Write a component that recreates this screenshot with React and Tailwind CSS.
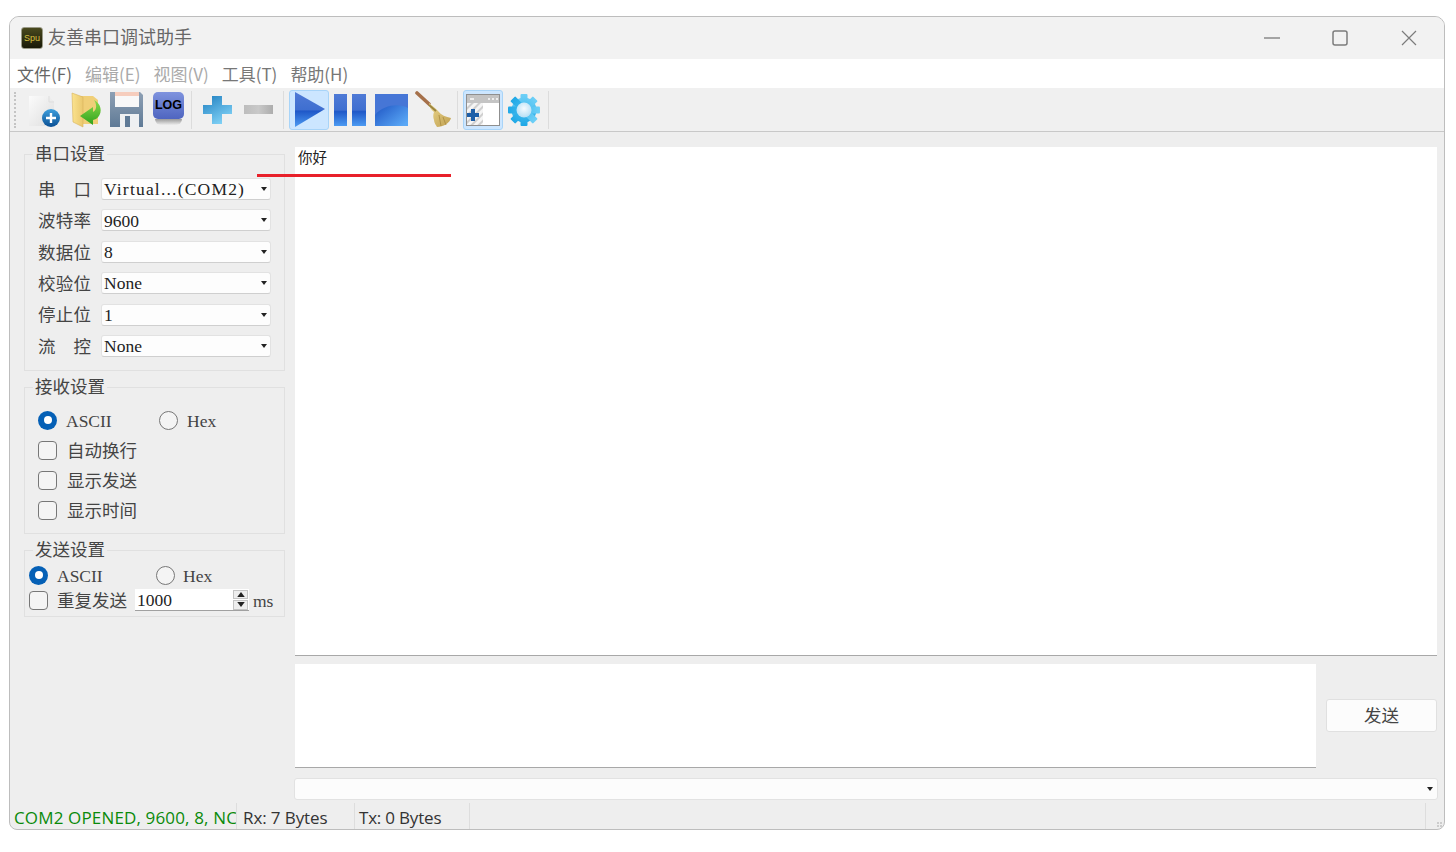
import React from 'react';

const cjk = "font-['Noto_Sans_CJK_SC','Noto_Sans',sans-serif]";
const latin = "font-['Liberation_Serif','Noto_Sans_CJK_SC',serif]";

const Separator = ({ className }) => <div className={`w-px h-[38px] bg-[#dcdcdc] shrink-0 ${className}`}></div>;

const DropArrow = () => (
  <svg width="6" height="4" viewBox="0 0 6 4" className="shrink-0">
    <path d="M0 0h6L3 4z" fill="#222" />
  </svg>
);

const Combo = ({ value, wide }) => (
  <div className={`w-[170px] h-[22px] flex items-center justify-between pl-[2px] pr-[3px] bg-[#fdfdfd] border border-[#e2e2e2] border-b-[#cfcfcf] rounded-[3px] ${latin} text-[17.5px] text-[#222]`}>
    <span className={wide ? 'leading-none whitespace-pre pt-[2px] tracking-[1.2px]' : 'leading-none whitespace-pre pt-[2px]'}>{value}</span>
    <DropArrow />
  </div>
);

const Radio = ({ checked }) =>
  checked ? (
    <div className="w-[19px] h-[19px] rounded-full bg-[#0560b6] flex items-center justify-center shrink-0">
      <div className="w-2 h-2 rounded-full bg-white"></div>
    </div>
  ) : (
    <div className="w-[19px] h-[19px] rounded-full border-[1.5px] border-[#777] bg-[#f4f4f4] shrink-0"></div>
  );

const Check = () => <div className="w-[19px] h-[19px] rounded-[4px] border-[1.5px] border-[#777] bg-[#f4f4f4] shrink-0"></div>;

const Group = ({ title, className, children }) => (
  <fieldset className={`border border-[#e0e0e0] w-[261px] ${className}`}>
    <legend className={`ml-2 px-[2px] h-5 leading-[18px] text-[17.5px] text-[#444] ${cjk}`}>{title}</legend>
    {children}
  </fieldset>
);

const PortRow = ({ label, value, wide }) => (
  <div className="flex items-center h-[22px]">
    <div className={`w-[53px] ml-[13px] mr-[10px] flex justify-between text-[17.5px] text-[#444] ${cjk}`}>
      {label.map((c, i) => <span key={i}>{c}</span>)}
    </div>
    <Combo value={value} wide={wide} />
  </div>
);

const CheckRow = ({ label }) => (
  <div className="flex items-center h-5 pl-[13px] gap-[10px]">
    <Check />
    <span className={`text-[17.5px] text-[#444] ${cjk}`}>{label}</span>
  </div>
);

const NewFileIcon = () => (
  <svg width="32" height="36" viewBox="0 0 32 36" className="shrink-0">
    <defs>
      <linearGradient id="doc" x1="0" y1="0" x2="1" y2="1"><stop offset="0" stopColor="#fbfbfb" /><stop offset="1" stopColor="#dedede" /></linearGradient>
      <linearGradient id="docb" x1="0" y1="0" x2="0" y2="1"><stop offset="0" stopColor="#3fa0de" /><stop offset="1" stopColor="#0a4f94" /></linearGradient>
    </defs>
    <path d="M0 4h20l5 6v24H0z" fill="url(#doc)" />
    <path d="M20 4v6h5" fill="none" stroke="#ddd" />
    <circle cx="22" cy="26" r="9" fill="url(#docb)" />
    <path d="M22 21v10M17 26h10" stroke="#fff" strokeWidth="2.4" />
  </svg>
);

const FolderIcon = () => (
  <svg width="31" height="36" viewBox="0 0 31 36" className="shrink-0">
    <defs>
      <linearGradient id="fold" x1="0" y1="0" x2="1" y2="0"><stop offset="0" stopColor="#fbe38f" /><stop offset="1" stopColor="#eac86e" /></linearGradient>
      <linearGradient id="arrowg" x1="0" y1="0" x2="0" y2="1"><stop offset="0" stopColor="#8ddb4a" /><stop offset="1" stopColor="#2ea21d" /></linearGradient>
    </defs>
    <path d="M9 4h13l5 4v24H9z" fill="#f0cf78" />
    <path d="M1 1l11 4v30L2 30z" fill="url(#fold)" stroke="#d9b45a" strokeWidth="0.6" />
    <path d="M23 8c8 4 9 14 2 19l-3 1v5L9 24l13-9v5c4-2 4-8 1-12z" fill="url(#arrowg)" />
  </svg>
);

const SaveIcon = () => (
  <svg width="35" height="36" viewBox="0 0 35 36" className="shrink-0">
    <defs>
      <linearGradient id="disk" x1="0" y1="0" x2="0" y2="1"><stop offset="0" stopColor="#8ea0b4" /><stop offset="1" stopColor="#5f7a96" /></linearGradient>
    </defs>
    <path d="M1 0h30l3 3v32H1z" fill="url(#disk)" />
    <rect x="6" y="0" width="24" height="4" fill="#f6cdbd" />
    <rect x="6" y="4" width="24" height="11" fill="#f8f8f8" />
    <rect x="11" y="22" width="19" height="13" fill="#eef0f2" />
    <rect x="16" y="24" width="5" height="11" fill="#5f7a96" />
  </svg>
);

const LogIcon = () => (
  <div className="w-[31px] h-[35px] shrink-0 flex flex-col">
    <div className="h-[27px] rounded-[5px] bg-gradient-to-b from-[#7f93de] to-[#4f65c0] flex items-center justify-center font-['Liberation_Sans',sans-serif] font-bold text-[12.5px] leading-none text-black">LOG</div>
    <div className="h-[6px] mx-[2px] rounded-b-full bg-gradient-to-b from-[#9a9a9a] to-[#eeeeee]"></div>
  </div>
);

const PlusIcon = () => (
  <svg width="30" height="30" viewBox="0 0 30 30" className="shrink-0">
    <defs>
      <linearGradient id="plus" x1="0" y1="0" x2="0.6" y2="1"><stop offset="0" stopColor="#1f7fc0" /><stop offset="1" stopColor="#7fd0f5" /></linearGradient>
    </defs>
    <path d="M10 1h10v9h10v9H20v10H10V19H1v-9h9z" fill="url(#plus)" />
  </svg>
);

const MinusIcon = () => (
  <div className="w-[29px] h-[9px] shrink-0 bg-gradient-to-r from-[#bdbdbd] via-[#c9c9c9] to-[#adadad]"></div>
);

const BlueFill = ({ id }) => (
  <linearGradient id={id} x1="0" y1="0" x2="0" y2="1">
    <stop offset="0" stopColor="#4f7ad6" />
    <stop offset="0.5" stopColor="#3f6fd0" />
    <stop offset="0.55" stopColor="#1f58c8" />
    <stop offset="1" stopColor="#4d9bf2" />
  </linearGradient>
);

const PlayIcon = () => (
  <div className="w-10 h-10 shrink-0 rounded-[3px] bg-[#cce6ff] border border-[#a8d4f8] flex items-center justify-center">
    <svg width="31" height="35" viewBox="0 0 31 35">
      <defs><BlueFill id="play" /></defs>
      <path d="M1 0l30 17L1 35z" fill="url(#play)" />
    </svg>
  </div>
);

const PauseIcon = () => (
  <svg width="32" height="32" viewBox="0 0 32 32" className="shrink-0">
    <defs><BlueFill id="pause" /></defs>
    <rect x="0" y="0" width="13" height="32" fill="url(#pause)" />
    <rect x="18" y="0" width="14" height="32" fill="url(#pause)" />
  </svg>
);

const StopIcon = () => (
  <svg width="33" height="32" viewBox="0 0 33 32" className="shrink-0">
    <defs>
      <linearGradient id="stop" x1="0" y1="0" x2="1" y2="0.8"><stop offset="0" stopColor="#1f55c4" /><stop offset="1" stopColor="#5aa8f6" /></linearGradient>
    </defs>
    <rect width="33" height="32" fill="#4676d6" />
    <path d="M0 32V21C8 11 24 9 33 14v18z" fill="url(#stop)" />
  </svg>
);

const BroomIcon = () => (
  <svg width="37" height="37" viewBox="0 0 37 37" className="shrink-0">
    <defs>
      <linearGradient id="straw" x1="0" y1="0" x2="1" y2="1"><stop offset="0" stopColor="#ecd88f" /><stop offset="1" stopColor="#c0a050" /></linearGradient>
    </defs>
    <path d="M2 2l12 11" stroke="#a5704a" strokeWidth="3.6" strokeLinecap="round" />
    <path d="M14 12l6 5c1 1 2 2 3 3 3 4 8 6 13 7-1 5-8 9-14 9-1-2-3-4-3-7-1-3-1-5 0-8-3-2-5-5-5-9z" fill="url(#straw)" />
    <path d="M14 14l7 6" stroke="#9a8440" strokeWidth="2" />
    <path d="M24 24l2 11M28 26l3 8" stroke="#a88a40" strokeWidth="0.8" />
  </svg>
);

const PanelIcon = () => (
  <div className="w-[40px] h-10 shrink-0 rounded-[3px] bg-[#cce6ff] border border-[#a8d4f8] flex items-center justify-center">
    <svg width="34" height="32" viewBox="0 0 34 32">
      <defs>
        <pattern id="hatch" width="5" height="5" patternUnits="userSpaceOnUse" patternTransform="rotate(45)">
          <rect width="5" height="5" fill="#f5f5f5" />
          <rect width="2" height="5" fill="#cfcfcf" />
        </pattern>
      </defs>
      <rect x="0.5" y="0.5" width="33" height="31" fill="#fff" stroke="#8f8f8f" />
      <rect x="1" y="1" width="32" height="8" fill="#c4c4c4" />
      <path d="M4 5h4M22 5h2M26 5h2M30 5h2" stroke="#eeeeee" strokeWidth="2" />
      <rect x="1" y="9" width="16" height="22" fill="url(#hatch)" />
      <path d="M7 15v12M1 21h12" stroke="#1d5fa8" strokeWidth="4" />
    </svg>
  </div>
);

const GearIcon = () => (
  <svg width="32" height="32" viewBox="0 0 32 32" className="shrink-0">
    <defs>
      <radialGradient id="hub" cx="0.5" cy="0.4" r="0.6"><stop offset="0" stopColor="#f5fbff" /><stop offset="1" stopColor="#b5dff5" /></radialGradient>
      <linearGradient id="gear" x1="0" y1="0" x2="0" y2="1"><stop offset="0" stopColor="#6fd0f7" /><stop offset="1" stopColor="#1fa8e6" /></linearGradient>
    </defs>
    <g fill="url(#gear)">
      <circle cx="16" cy="16" r="12.5" />
      <rect x="12.5" y="0" width="7" height="32" rx="1" />
      <rect x="12.5" y="0" width="7" height="32" rx="1" transform="rotate(45 16 16)" />
      <rect x="12.5" y="0" width="7" height="32" rx="1" transform="rotate(90 16 16)" />
      <rect x="12.5" y="0" width="7" height="32" rx="1" transform="rotate(135 16 16)" />
    </g>
    <circle cx="16" cy="16" r="7.5" fill="url(#hub)" />
  </svg>
);

const App = () => {
  return (
    <div className="relative w-[1456px] h-[852px] bg-white pt-4 pl-[9px] overflow-hidden">
      <div className="w-[1436px] h-[814px] flex flex-col border border-[#bdbdbd] rounded-t-[10px] rounded-b-[8px] overflow-hidden bg-[#eeeeee]">
        {/* Title bar */}
        <div className="h-[42px] shrink-0 bg-[#f2f2f2] flex items-center pl-[11px]">
          <div className="w-[22px] h-[22px] rounded-[3px] bg-gradient-to-b from-[#4a4a1e] to-[#1a1a08] border border-[#9a9a88] flex items-center justify-center text-[9px] leading-none text-[#d8c040] font-['Liberation_Sans',sans-serif]">Spu</div>
          <span className={`ml-[5px] text-[18px] leading-[20px] pb-1 text-[#666] ${cjk}`}>友善串口调试助手</span>
          <div className="ml-auto flex items-center">
            <svg width="16" height="16" viewBox="0 0 16 16"><path d="M0 8h16" stroke="#8a8a8a" strokeWidth="1.3" /></svg>
            <svg width="16" height="16" viewBox="0 0 16 16" className="ml-[52px]"><rect x="1" y="1" width="14" height="14" rx="2" fill="none" stroke="#7c7c7c" strokeWidth="1.5" /></svg>
            <svg width="16" height="16" viewBox="0 0 16 16" className="ml-[53px] mr-[27px]"><path d="M1 1l14 14M15 1L1 15" stroke="#7c7c7c" strokeWidth="1.2" /></svg>
          </div>
        </div>

        {/* Menu */}
        <div className={`h-[29px] shrink-0 bg-white flex items-center pl-[7px] gap-[13px] text-[17px] ${cjk}`}>
          <span className="text-[#666]">文件(F)</span>
          <span className="text-[#aaa]">编辑(E)</span>
          <span className="text-[#aaa]">视图(V)</span>
          <span className="text-[#777]">工具(T)</span>
          <span className="text-[#777]">帮助(H)</span>
        </div>

        {/* Toolbar */}
        <div className="h-11 shrink-0 bg-[#f0f0f0] border-b border-[#c8c8c8] flex items-center pl-1">
          <div className="w-[2px] h-[36px] border-l-2 border-dotted border-[#c4c4c4] shrink-0"></div>
          <div className="ml-[13px]"><NewFileIcon /></div>
          <div className="ml-[10px]"><FolderIcon /></div>
          <div className="ml-[7px]"><SaveIcon /></div>
          <div className="ml-[9px]"><LogIcon /></div>
          <Separator className="ml-[7px]" />
          <div className="ml-[10px]"><PlusIcon /></div>
          <div className="ml-3"><MinusIcon /></div>
          <Separator className="ml-[10px]" />
          <div className="ml-[5px]"><PlayIcon /></div>
          <div className="ml-[5px]"><PauseIcon /></div>
          <div className="ml-[9px]"><StopIcon /></div>
          <div className="ml-[7px]"><BroomIcon /></div>
          <Separator className="ml-[5px]" />
          <div className="ml-[5px]"><PanelIcon /></div>
          <div className="ml-[5px]"><GearIcon /></div>
          <Separator className="ml-2" />
        </div>

        {/* Body */}
        <div className="flex-1 flex min-h-0">
          {/* Left settings column */}
          <div className="w-[285px] shrink-0 pl-[14px] pt-3 flex flex-col gap-[6px]">
            <Group title="串口设置" className="h-[227px]">
              <div className="flex flex-col gap-[9.4px] pt-[14px]">
                <PortRow label={['串', '口']} value="Virtual...(COM2)" wide />
                <PortRow label={['波', '特', '率']} value="9600" />
                <PortRow label={['数', '据', '位']} value="8" />
                <PortRow label={['校', '验', '位']} value="None" />
                <PortRow label={['停', '止', '位']} value="1" />
                <PortRow label={['流', '控']} value="None" />
              </div>
            </Group>

            <Group title="接收设置" className="h-[157px]">
              <div className="flex flex-col gap-[10px] pt-[13px]">
                <div className={`flex items-center h-5 pl-[13px] ${latin} text-[17.5px] text-[#444]`}>
                  <Radio checked />
                  <span className="ml-[9px] w-[93px] pt-[2px]">ASCII</span>
                  <Radio />
                  <span className="ml-[9px] pt-[2px]">Hex</span>
                </div>
                <CheckRow label="自动换行" />
                <CheckRow label="显示发送" />
                <CheckRow label="显示时间" />
              </div>
            </Group>

            <Group title="发送设置" className="h-[77px]">
              <div className="flex flex-col gap-[5px] pt-[5px] pl-[4px]">
                <div className={`flex items-center h-5 ${latin} text-[17.5px] text-[#444]`}>
                  <Radio checked />
                  <span className="ml-[9px] w-[99px] pt-[2px]">ASCII</span>
                  <Radio />
                  <span className="ml-2 pt-[2px]">Hex</span>
                </div>
                <div className="flex items-center h-5">
                  <Check />
                  <span className={`ml-[9px] text-[17.5px] text-[#444] ${cjk}`}>重复发送</span>
                  <div className={`ml-2 w-[114px] h-[22px] flex items-center justify-between bg-white border-b border-[#a0a0a0] pl-[2px] pr-px ${latin} text-[17.5px] text-[#222]`}>
                    <span className="pt-[2px]">1000</span>
                    <div className="w-[15px] h-[20px] flex flex-col gap-px">
                      <div className="flex-1 bg-[#eeeeee] border border-[#c4c4c4] flex items-center justify-center"><svg width="8" height="5" viewBox="0 0 6 4"><path d="M3 0l3 4H0z" fill="#222" /></svg></div>
                      <div className="flex-1 bg-[#eeeeee] border border-[#c4c4c4] flex items-center justify-center"><svg width="8" height="5" viewBox="0 0 6 4"><path d="M0 0h6L3 4z" fill="#222" /></svg></div>
                    </div>
                  </div>
                  <span className={`ml-1 pt-[3px] ${latin} text-[17.5px] text-[#444]`}>ms</span>
                </div>
              </div>
            </Group>
          </div>

          {/* Right column */}
          <div className="flex-1 min-w-0 flex flex-col pt-[15px] pr-[7px]">
            <div className={`h-[509px] shrink-0 bg-white border-b border-[#a8a8a8] pl-[3px] text-[14.5px] leading-[19px] text-[#222] ${cjk}`}>你好</div>
            <div className="flex mt-2 h-[104px] shrink-0">
              <div className="w-[1021px] bg-white border-b border-[#a8a8a8]"></div>
              <div className="flex-1 flex items-center pl-[10px]">
                <div className={`w-full h-[33px] -mt-[2px] rounded-[3px] bg-[#fcfcfc] border border-[#e0e0e0] flex items-center justify-center text-[17.5px] text-[#444] ${cjk}`}>发送</div>
              </div>
            </div>
            <div className="-ml-px mr-[-1px] mt-[10px] h-[22px] shrink-0 flex items-center justify-end pr-1 bg-[#fcfcfc] border border-[#e2e2e2] rounded-[3px]">
              <DropArrow />
            </div>
          </div>
        </div>

        {/* Status bar */}
        <div className="h-[29px] shrink-0 pt-[3px] flex items-stretch font-['Open_Sans',sans-serif] text-[17px] leading-none">
          <div className="w-[227px] pl-[4px] pt-[2px] flex items-center border-r border-[#dddddd] text-[#0a8a0a] whitespace-nowrap overflow-hidden tracking-[0.15px]">COM2 OPENED, 9600, 8, NC</div>
          <div className="w-[118px] pl-[6px] pt-[2px] flex items-center border-r border-[#dddddd] text-[#333] tracking-[-0.1px]">Rx: 7 Bytes</div>
          <div className="w-[115px] pl-[4px] pt-[2px] flex items-center border-r border-[#dddddd] text-[#333] tracking-[-0.2px]">Tx: 0 Bytes</div>
          <div className="flex-1 flex justify-end items-end">
            <div className="w-[19px] h-full border-l border-[#dddddd] flex items-end justify-end pr-[2px] pb-[2px]">
              <div className="grid grid-cols-2 gap-px">
                <div className="w-[2px] h-[2px] bg-[#cccccc]"></div>
                <div className="w-[2px] h-[2px] bg-[#cccccc]"></div>
                <div className="w-[2px] h-[2px] bg-[#cccccc]"></div>
                <div className="w-[2px] h-[2px] bg-[#cccccc]"></div>
              </div>
            </div>
          </div>
        </div>
      </div>

      {/* red annotation line drawn over the screenshot */}
      <div className="absolute left-[257px] top-[174px] w-[194px] h-[3px] bg-[#e8202a]"></div>
    </div>
  );
};

export default App;
